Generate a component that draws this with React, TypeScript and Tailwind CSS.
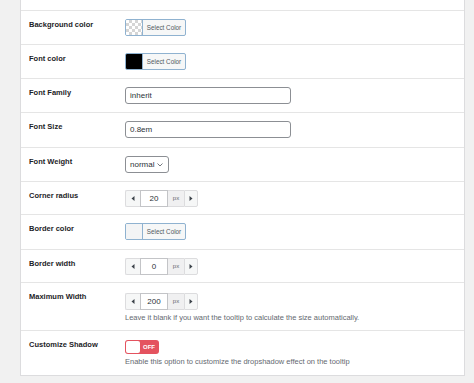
import type { ReactNode } from "react";

const font = "font-['Liberation_Sans',Arial,sans-serif]";

function Row({ label, children, h }: { label: string; children: ReactNode; h: string }) {
    return (
        <div className={`flex border-t border-[#e5e5e5] ${h}`}>
            <div className="w-[104px] shrink-0 pl-[8px] pt-[9px] text-[7.5px] font-bold leading-[9px] text-[#1d2327]">
                {label}
            </div>
            <div className="pt-[8px]">{children}</div>
        </div>
    );
}

function ColorButton({ swatch }: { swatch: "checker" | "black" | "empty" }) {
    const swatchCls =
        swatch === "black"
            ? "bg-black"
            : swatch === "checker"
              ? "bg-[repeating-conic-gradient(#d5d5d5_0%_25%,#ffffff_0%_50%)] bg-[length:6px_6px]"
              : "bg-[#f3f4f5]";
    return (
        <div className="flex h-[17px] w-[61px] overflow-hidden rounded-[2px] border border-[#8fb2d0] bg-[#f6f7f7]">
            <div className={`w-[17px] border-r border-[#8fb2d0] ${swatchCls}`} />
            <div className="flex flex-1 items-center justify-center text-[6.3px] text-[#50575e]">Select Color</div>
        </div>
    );
}

function TextInput({ value }: { value: string }) {
    return (
        <div className="flex h-[17px] w-[166px] items-center rounded-[3px] border border-[#8c8f94] bg-white px-[4px] text-[8px] text-[#2c3338]">
            {value}
        </div>
    );
}

function Stepper({ value }: { value: string }) {
    return (
        <div className="flex h-[17px] text-[#2c3338]">
            <div className="flex w-[15px] items-center justify-center rounded-l-[2px] border border-r-0 border-[#dcdcde] bg-[#f6f7f7]">
                <svg width="4" height="5" viewBox="0 0 4 5"><path d="M3.5 0 L0.5 2.5 L3.5 5 Z" fill="#3c434a" /></svg>
            </div>
            <div className="flex w-[28px] items-center justify-center border border-[#c3c4c7] bg-white text-[8px]">{value}</div>
            <div className="flex w-[16px] items-center justify-center border-y border-[#dcdcde] bg-[#f0f0f1] text-[6px] text-[#646970]">px</div>
            <div className="flex w-[14px] items-center justify-center rounded-r-[2px] border border-l border-[#dcdcde] bg-[#f6f7f7]">
                <svg width="4" height="5" viewBox="0 0 4 5"><path d="M0.5 0 L3.5 2.5 L0.5 5 Z" fill="#3c434a" /></svg>
            </div>
        </div>
    );
}

function Help({ children }: { children: ReactNode }) {
    return <div className="mt-[3px] whitespace-nowrap text-[7.5px] leading-[9px] text-[#646970]">{children}</div>;
}

export default function App() {
    return (
        <div className={`h-[383px] w-[474px] bg-[#f1f1f1] pl-[20px] pr-[9px] ${font}`}>
            <div className="border-x border-b border-[#dcdcde] bg-white pt-[10px]">
                <Row label="Background color" h="h-[34px]">
                    <ColorButton swatch="checker" />
                </Row>
                <Row label="Font color" h="h-[34px]">
                    <ColorButton swatch="black" />
                </Row>
                <Row label="Font Family" h="h-[34px]">
                    <TextInput value="inherit" />
                </Row>
                <Row label="Font Size" h="h-[35px]">
                    <TextInput value="0.8em" />
                </Row>
                <Row label="Font Weight" h="h-[34px]">
                    <div className="flex h-[17px] w-[44px] items-center gap-[3px] rounded-[3px] border border-[#8c8f94] bg-white pl-[4px] text-[8px] text-[#2c3338]">
                        normal
                        <svg width="6" height="4" viewBox="0 0 6 4"><path d="M0.5 0.5 L3 3 L5.5 0.5" fill="none" stroke="#50575e" strokeWidth="0.8" /></svg>
                    </div>
                </Row>
                <Row label="Corner radius" h="h-[33px]">
                    <Stepper value="20" />
                </Row>
                <Row label="Border color" h="h-[35px]">
                    <ColorButton swatch="empty" />
                </Row>
                <Row label="Border width" h="h-[33px]">
                    <Stepper value="0" />
                </Row>
                <Row label="Maximum Width" h="h-[48px]">
                    <div className="pt-[2px]">
                        <Stepper value="200" />
                        <Help>Leave it blank if you want the tooltip to calculate the size automatically.</Help>
                    </div>
                </Row>
                <Row label="Customize Shadow" h="h-[45px]">
                    <div className="pt-[1px]">
                        <div className="flex h-[14px] w-[34px] items-center rounded-[3px] bg-[#e4535f] p-[1px]">
                            <div className="h-[12px] w-[14px] rounded-[2px] bg-white" />
                            <span className="flex-1 text-center text-[6px] font-bold text-white">OFF</span>
                        </div>
                        <Help>Enable this option to customize the dropshadow effect on the tooltip</Help>
                    </div>
                </Row>
            </div>
        </div>
    );
}
